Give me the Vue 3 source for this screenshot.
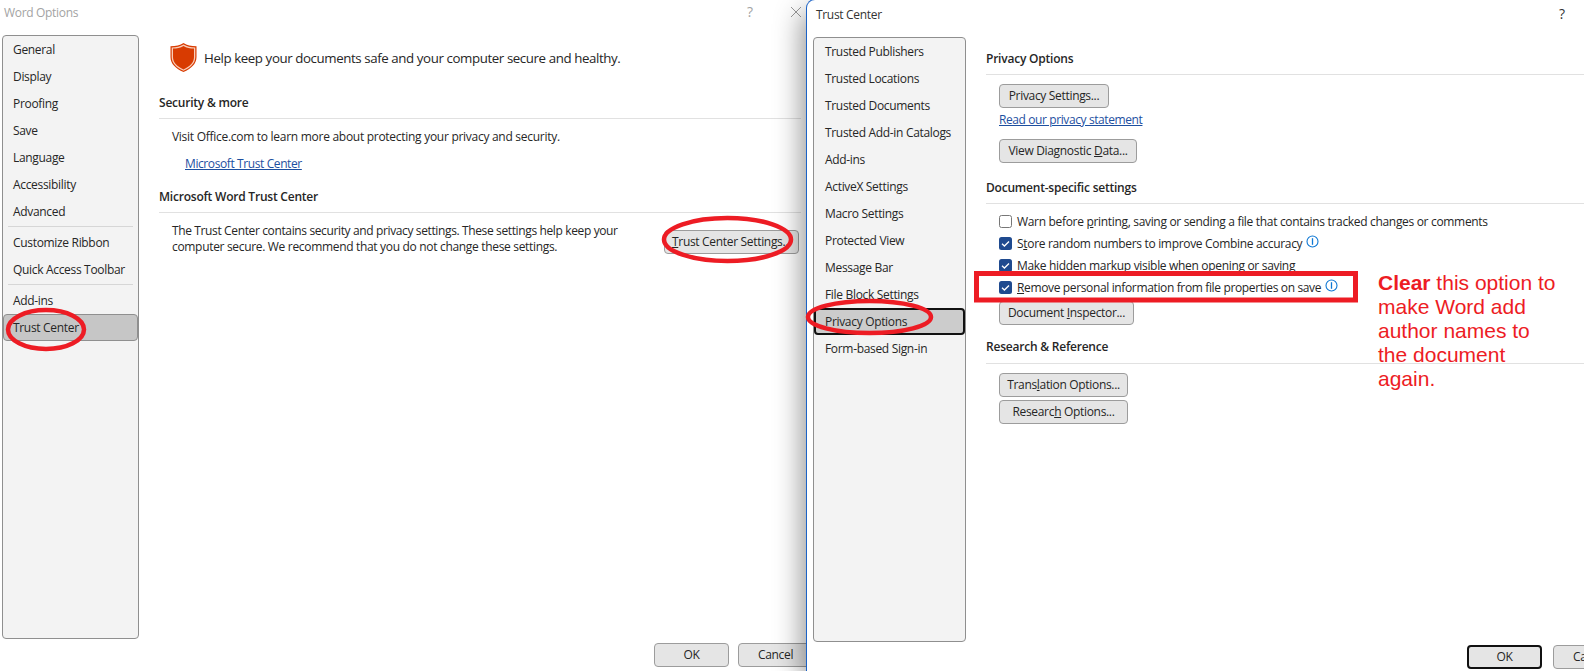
<script setup>
const leftGroups = [
  ['General', 'Display', 'Proofing', 'Save', 'Language', 'Accessibility', 'Advanced'],
  ['Customize Ribbon', 'Quick Access Toolbar'],
  ['Add-ins', 'Trust Center']
]
const rightItems = ['Trusted Publishers', 'Trusted Locations', 'Trusted Documents', 'Trusted Add-in Catalogs', 'Add-ins', 'ActiveX Settings', 'Macro Settings', 'Protected View', 'Message Bar', 'File Block Settings', 'Privacy Options', 'Form-based Sign-in']
</script>

<template>
  <div class="desk">
    <section class="win left-win">
      <header class="title left-title">
        <span>Word Options</span>
        <span class="help">?</span>
        <svg class="close" width="12" height="12" viewBox="0 0 12 12"><path d="M1 1l10 10M11 1L1 11" stroke="#9a9a9a" fill="none"/></svg>
      </header>
      <div class="body">
        <nav class="side left-side">
          <div v-for="(group, g) in leftGroups" :key="g" class="group">
            <div v-for="item in group" :key="item" class="item" :class="{ sel: item === 'Trust Center' }">{{ item }}</div>
          </div>
        </nav>
        <main class="main left-main">
          <div class="hero">
            <svg width="27" height="29" viewBox="0 0 27 29">
              <path d="M13.500 0C10 2.300 6 3.200 .5 3.200V14c0 7 5.300 11.600 13 15C21.200 25.600 26.500 21 26.500 14V3.200C21 3.200 17 2.300 13.500 0z" fill="#d83b01"/>
              <path d="M13.500 1.500C10.200 3.600 6.400 4.300 1.700 4.400V14c0 6.300 4.800 10.700 11.800 13.700C20.500 24.700 25.300 20.300 25.300 14V4.400C20.600 4.300 16.800 3.600 13.500 1.500z" fill="#f9cdb9"/>
              <path d="M13.500 3C10.500 4.800 7 5.500 3 5.600V14c0 5.600 4.300 9.700 10.500 12.400C19.700 23.700 24 19.600 24 14V5.600C20 5.500 16.500 4.800 13.500 3z" fill="#d83b01"/>
            </svg>
            <span>Help keep your documents safe and your computer secure and healthy.</span>
          </div>
          <h2 class="head first">Security &amp; more</h2>
          <p class="line visit">Visit Office.com to learn more about protecting your privacy and security.</p>
          <a class="link ms">Microsoft Trust Center</a>
          <h2 class="head second">Microsoft Word Trust Center</h2>
          <div class="tc">
            <p class="line tc-text"><span class="tc-first">The Trust Center contains security and privacy settings. These settings help keep your</span><br>computer secure. We recommend that you do not change these settings.</p>
            <button class="btn tc-btn"><u>T</u>rust Center Settings...</button>
          </div>
        </main>
      </div>
      <footer class="foot left-foot">
        <button class="btn ok">OK</button>
        <button class="btn cancel">Cancel</button>
      </footer>
    </section>

    <section class="win right-win">
      <header class="title right-title">
        <span>Trust Center</span>
        <span class="help dark">?</span>
      </header>
      <div class="body">
        <nav class="side right-side">
          <div v-for="item in rightItems" :key="item" class="item" :class="{ active: item === 'Privacy Options' }">{{ item }}</div>
        </nav>
        <main class="main right-main">
          <h2 class="head r1">Privacy Options</h2>
          <div class="indent">
            <button class="btn b-priv">Privacy Settings...</button>
            <a class="link read">Read our privacy statement</a>
            <button class="btn b-diag">View Diagnostic <u>D</u>ata...</button>
          </div>
          <h2 class="head r2">Document-specific settings</h2>
          <div class="indent checks">
            <label class="check"><span class="box off"></span><span>Warn before <u>p</u>rinting, saving or sending a file that contains tracked changes or comments</span></label>
            <label class="check"><span class="box"><svg width="13" height="13" viewBox="0 0 13 13"><path d="M3 6.800l2.400 2.200L10 4.500" fill="none" stroke="#fff" stroke-width="1.300"/></svg></span><span>S<u>t</u>ore random numbers to improve Combine accuracy</span><svg class="info" width="13" height="13" viewBox="0 0 13 13"><circle cx="6.500" cy="6.500" r="5.500" fill="none" stroke="#0f78d4" stroke-width="1.100"/><path d="M6.500 3.200v6.600" stroke="#0f78d4" stroke-width="1.300"/></svg></label>
            <label class="check"><span class="box"><svg width="13" height="13" viewBox="0 0 13 13"><path d="M3 6.800l2.400 2.200L10 4.500" fill="none" stroke="#fff" stroke-width="1.300"/></svg></span><span>Make hidden markup visible when opening or saving</span></label>
            <label class="check"><span class="box"><svg width="13" height="13" viewBox="0 0 13 13"><path d="M3 6.800l2.400 2.200L10 4.500" fill="none" stroke="#fff" stroke-width="1.300"/></svg></span><span class="rm"><u>R</u>emove personal information from file properties on save</span><svg class="info" width="13" height="13" viewBox="0 0 13 13"><circle cx="6.500" cy="6.500" r="5.500" fill="none" stroke="#0f78d4" stroke-width="1.100"/><path d="M6.500 3.200v6.600" stroke="#0f78d4" stroke-width="1.300"/></svg></label>
            <button class="btn b-insp">Document <u>I</u>nspector...</button>
          </div>
          <h2 class="head r3">Research &amp; Reference</h2>
          <div class="indent">
            <button class="btn b-tr">Trans<u>l</u>ation Options...</button>
            <button class="btn b-re">Researc<u>h</u> Options...</button>
          </div>
        </main>
      </div>
      <footer class="foot right-foot">
        <button class="btn ok def">OK</button>
        <button class="btn cancel">Cancel</button>
      </footer>
    </section>

    <svg class="marks" width="1584" height="671" viewBox="0 0 1584 671">
      <g fill="none" stroke="#ed1c24">
        <ellipse cx="46" cy="329.500" rx="38" ry="19.500" stroke-width="4.500"/>
        <ellipse cx="727.500" cy="239.500" rx="63.500" ry="21.500" stroke-width="4.500"/>
        <ellipse cx="869.500" cy="317" rx="61.500" ry="16" stroke-width="4.500"/>
        <rect x="976.500" y="273.500" width="379" height="26.500" stroke-width="5"/>
      </g>
    </svg>
    <p class="note"><b>Clear</b> this option to<br>make Word add<br>author names to<br>the document<br>again.</p>
  </div>
</template>

<style>
html, body { margin: 0; overflow: hidden; background: #fff; }
</style>

<style scoped>
.desk {
  position: relative;
  width: 1584px;
  height: 671px;
  overflow: hidden;
  background: #fff;
  color: #262626;
  font: 12px/16px "Open Sans", "Noto Sans", sans-serif;
  letter-spacing: -0.32px;
}
.win {
  position: absolute;
  top: 0;
  height: 671px;
  display: flex;
  flex-direction: column;
  background: #fff;
  box-sizing: border-box;
}
.left-win { left: 0; width: 806px; }
.right-win {
  left: 806px;
  top: -1px;
  height: 672px;
  width: 900px;
  border-left: 1px solid #1b62c6;
  border-top: 1px solid #1b62c6;
  border-top-left-radius: 9px;
  box-shadow: -4px 12px 28px rgba(0, 0, 0, 0.42);
}
.title { display: flex; align-items: center; position: relative; }
.left-title { height: 26px; padding-left: 4px; color: #a3a3a3; }
.right-title { height: 30px; padding-left: 9px; color: #333; }
.help { position: absolute; left: 747px; top: 4px; color: #a3a3a3; font-size: 14px; }
.help.dark { left: 752px; top: 6px; color: #333; }
.close { position: absolute; left: 790px; top: 6px; }
.body { display: flex; flex: 1; min-height: 0; }
.side {
  box-sizing: border-box;
  background: #f3f3f3;
  border: 1px solid #8f8f8f;
  border-radius: 4px;
}
.left-side { margin: 9px 0 0 2px; width: 137px; height: 604px; padding: 0; flex: none; }
.group + .group { border-top: 1px solid #d6d6d6; margin: 1px 5px 0; padding-top: 2px; }
.group + .group .item { margin-left: -5px; margin-right: -5px; }
.item { height: 27px; line-height: 27px; padding-left: 10px; box-sizing: border-box; }
.group + .group .item.sel { background: #c6c6c6; border: 1px solid #8f8f8f; border-radius: 4px; padding-left: 9px; line-height: 25px; }
.right-side { margin: 7px 0 0 6px; width: 153px; height: 605px; padding-top: 0; flex: none; }
.right-side .item { padding-left: 11px; }
.right-side .item.active { background: #ccc; border: 2px solid #111; border-radius: 4px; padding-left: 9px; line-height: 23px; }
.main { min-width: 0; }
.left-main { margin-left: 20px; width: 642px; flex: none; }
.hero { display: flex; align-items: center; gap: 7px; font-size: 13.3px; margin: 17px 0 0 11px; height: 29px; letter-spacing: -0.41px; }
.head {
  margin: 0;
  font-size: 12px;
  font-weight: 600;
  line-height: 16px;
  letter-spacing: -0.22px;
  border-bottom: 1px solid #e1e1e1;
}
.first { margin-top: 23px; padding-bottom: 7px; }
.second { margin-top: 17px; padding-bottom: 7px; }
.line { margin: 0; }
.visit { margin: 10px 0 0 13px; letter-spacing: -0.28px; }
.link { display: block; color: #1d4f9f; text-decoration: underline; letter-spacing: -0.4px; white-space: nowrap; }
.ms { margin: 11px 0 0 26px; }
.tc { display: flex; margin: 10px 0 0 13px; }
.tc-text { width: 492px; flex: none; white-space: nowrap; }
.tc-first { letter-spacing: -0.37px; }
.btn {
  display: block;
  box-sizing: border-box;
  height: 24px;
  padding: 0;
  font: inherit;
  letter-spacing: inherit;
  color: #262626;
  background: #e5e5e5;
  border: 1px solid #9c9c9c;
  border-radius: 4px;
  flex: none;
}
.tc-btn { width: 135px; margin: 7px 0 0 0; }
.foot { display: flex; position: relative; }
.left-foot { height: 28px; padding-left: 654px; gap: 9px; }
.right-foot { height: 26px; padding-left: 660px; gap: 11px; }
.ok { width: 75px; }
.cancel { width: 75px; }
.def { border: 2px solid #111; }
.right-main { margin-left: 20px; width: 700px; flex: none; }
.r1 { margin-top: 21px; padding-bottom: 7px; }
.r2 { margin-top: 17px; padding-bottom: 7px; }
.r3 { margin-top: 14px; padding-bottom: 8px; }
.indent { padding-left: 13px; }
.b-priv { width: 110px; margin-top: 9px; }
.read { margin-top: 4px; width: 144px; }
.b-diag { width: 138px; margin-top: 11px; }
.checks { padding-top: 7px; }
.check { display: flex; align-items: center; height: 21.900px; }
.rm { letter-spacing: -0.36px; }
.box {
  box-sizing: border-box;
  width: 13px;
  height: 13px;
  margin-right: 5px;
  flex: none;
  background: #1f4a8f;
  border-radius: 2.500px;
  display: block;
}
.box svg { display: block; }
.box.off { background: #fff; border: 1px solid #777; }
.info { margin: -4px 0 0 4px; }
.b-insp { width: 135px; margin-top: 2px; }
.b-tr { width: 129px; margin-top: 9px; }
.b-re { width: 129px; margin-top: 3px; }
.marks { position: absolute; left: 0; top: 0; pointer-events: none; }
.note {
  position: absolute;
  left: 1378px;
  top: 271px;
  margin: 0;
  color: #ed1c24;
  font: 21px/24px "Liberation Sans", Arial, sans-serif;
  letter-spacing: 0;
}
</style>
